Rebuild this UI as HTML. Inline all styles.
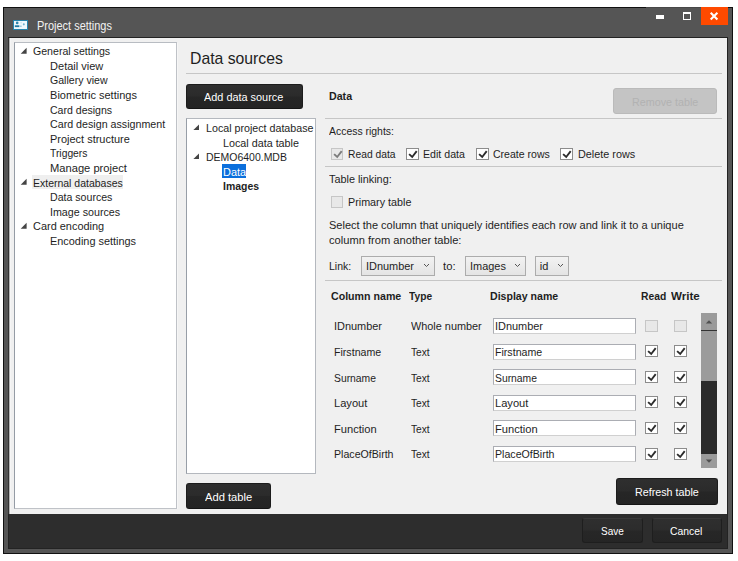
<!DOCTYPE html>
<html><head><meta charset="utf-8"><style>
html,body{margin:0;padding:0;}
body{width:738px;height:561px;background:#fff;position:relative;overflow:hidden;font-family:"Liberation Sans",sans-serif;}
.a{position:absolute;}
.t{position:absolute;white-space:nowrap;font-family:"Liberation Sans",sans-serif;}
</style></head><body>
<div class="a" style="left:3px;top:7px;width:730px;height:547px;box-sizing:border-box;background:#555;border:1px solid #111;"></div>
<div class="a" style="left:8px;top:37px;width:720px;height:512px;box-sizing:border-box;background:#f0f0f0;border:1px solid #232323;"></div>
<div class="a" style="left:9px;top:514px;width:718px;height:34px;background:#2d2d2d;"></div>
<div class="a" style="left:8px;top:38px;width:1px;height:476px;background:#333;"></div>
<div class="a" style="left:9px;top:38px;width:1px;height:476px;background:#b4b4b4;"></div>
<div class="a" style="left:10px;top:38px;width:1px;height:476px;background:#f5f5f5;"></div>
<svg class="a" style="left:13px;top:20px" width="15" height="10" viewBox="0 0 15 10">
<rect x="0.5" y="0.5" width="14" height="9" fill="#eef8fc" stroke="#2584ad" stroke-width="1"/>
<circle cx="4.2" cy="2.9" r="1.3" fill="#2a86ad"/>
<rect x="1.8" y="5.3" width="4.4" height="1.8" fill="#1f7aa3"/>
<rect x="6.2" y="5.6" width="2.5" height="1.2" fill="#8cc3da"/>
<ellipse cx="10.8" cy="4.3" rx="1" ry="1.1" fill="#6fb2cf"/>
<rect x="7.5" y="2" width="1.2" height="1.5" fill="#c5e2ee"/>
</svg>
<div class="t" style="left:36.70px;top:17.84px;font-size:12px;line-height:16px;color:#f2f2f2;transform:scaleX(0.9136);transform-origin:0 0;">Project settings</div>
<div class="a" style="left:646px;top:7px;width:55px;height:1px;background:#484848;"></div>
<div class="a" style="left:656px;top:15px;width:8px;height:4px;background:#fff;"></div>
<div class="a" style="left:683px;top:12px;width:8px;height:8px;box-sizing:border-box;border:1px solid #fff;border-top-width:2px;"></div>
<div class="a" style="left:701px;top:7px;width:27px;height:18px;background:#ff4a00;"></div>
<svg class="a" style="left:709px;top:11px" width="10" height="10" viewBox="0 0 10 10"><path d="M1.7 1.7 L8.4 8.4 M8.4 1.7 L1.7 8.4" stroke="#fff" stroke-width="2.1"/></svg>
<div class="a" style="left:14px;top:42px;width:163px;height:467px;box-sizing:border-box;background:#fff;border:1px solid #bfc2c7;border-top-color:#b8bcc2;border-left-color:#959ca5;"></div>
<div class="a" style="left:177px;top:43px;width:1px;height:466px;background:#f6f6f6;"></div>
<svg class="a" style="left:20px;top:47px" width="8" height="8" viewBox="0 0 8 8"><path d="M6.6 0.8 L6.6 6.8 L0.7 6.8 Z" fill="#444"/></svg>
<div class="t" style="left:32.90px;top:44.19px;font-size:11px;line-height:14px;color:#1e1e1e;transform:scaleX(0.9625);transform-origin:0 0;">General settings</div>
<div class="t" style="left:50.10px;top:58.79px;font-size:11px;line-height:14px;color:#1e1e1e;transform:scaleX(1.0000);transform-origin:0 0;">Detail view</div>
<div class="t" style="left:50.10px;top:73.39px;font-size:11px;line-height:14px;color:#1e1e1e;transform:scaleX(0.9600);transform-origin:0 0;">Gallery view</div>
<div class="t" style="left:50.10px;top:87.99px;font-size:11px;line-height:14px;color:#1e1e1e;transform:scaleX(1.0000);transform-origin:0 0;">Biometric settings</div>
<div class="t" style="left:50.10px;top:102.59px;font-size:11px;line-height:14px;color:#1e1e1e;transform:scaleX(0.9585);transform-origin:0 0;">Card designs</div>
<div class="t" style="left:50.10px;top:117.19px;font-size:11px;line-height:14px;color:#1e1e1e;transform:scaleX(0.9706);transform-origin:0 0;">Card design assignment</div>
<div class="t" style="left:50.10px;top:131.79px;font-size:11px;line-height:14px;color:#1e1e1e;transform:scaleX(0.9962);transform-origin:0 0;">Project structure</div>
<div class="t" style="left:50.10px;top:146.39px;font-size:11px;line-height:14px;color:#1e1e1e;transform:scaleX(0.9375);transform-origin:0 0;">Triggers</div>
<div class="t" style="left:50.10px;top:160.99px;font-size:11px;line-height:14px;color:#1e1e1e;transform:scaleX(1.0133);transform-origin:0 0;">Manage project</div>
<div class="a" style="left:32px;top:175px;width:91px;height:14px;background:#efefef;"></div>
<svg class="a" style="left:20px;top:178px" width="8" height="8" viewBox="0 0 8 8"><path d="M6.6 0.8 L6.6 6.8 L0.7 6.8 Z" fill="#444"/></svg>
<div class="t" style="left:32.90px;top:175.59px;font-size:11px;line-height:14px;color:#1e1e1e;transform:scaleX(0.9527);transform-origin:0 0;">External databases</div>
<div class="t" style="left:50.10px;top:190.19px;font-size:11px;line-height:14px;color:#1e1e1e;transform:scaleX(0.9625);transform-origin:0 0;">Data sources</div>
<div class="t" style="left:50.10px;top:204.79px;font-size:11px;line-height:14px;color:#1e1e1e;transform:scaleX(0.9718);transform-origin:0 0;">Image sources</div>
<svg class="a" style="left:20px;top:222px" width="8" height="8" viewBox="0 0 8 8"><path d="M6.6 0.8 L6.6 6.8 L0.7 6.8 Z" fill="#444"/></svg>
<div class="t" style="left:32.90px;top:219.39px;font-size:11px;line-height:14px;color:#1e1e1e;transform:scaleX(0.9944);transform-origin:0 0;">Card encoding</div>
<div class="t" style="left:50.10px;top:233.99px;font-size:11px;line-height:14px;color:#1e1e1e;transform:scaleX(0.9907);transform-origin:0 0;">Encoding settings</div>
<div class="t" style="left:190.40px;top:47.81px;font-size:17px;line-height:22px;color:#1e1e1e;transform:scaleX(0.9273);transform-origin:0 0;">Data sources</div>
<div class="a" style="left:186px;top:73px;width:536px;height:1px;background:#c6c6c6;"></div>
<div class="a" style="left:186px;top:84px;width:117px;height:25px;box-sizing:border-box;background:linear-gradient(#2f2f2f 0%,#2b2b2b 48%,#262626 52%,#242424 100%);border:1px solid #1c1c1c;border-bottom-color:#151515;border-radius:3px;"></div>
<div class="t" style="left:204.20px;top:90.19px;font-size:11px;line-height:14px;color:#fff;transform:scaleX(0.9900);transform-origin:0 0;">Add data source</div>
<div class="a" style="left:186px;top:118px;width:130px;height:356px;box-sizing:border-box;background:#fff;border:1px solid #b4b8be;border-left-color:#979ea7;"></div>
<svg class="a" style="left:193px;top:124px" width="8" height="8" viewBox="0 0 8 8"><path d="M6 0.6 L6 6 L0.4 6 Z" fill="#444"/></svg>
<div class="t" style="left:205.60px;top:121.39px;font-size:11px;line-height:14px;color:#1e1e1e;transform:scaleX(0.9709);transform-origin:0 0;">Local project database</div>
<div class="t" style="left:223.00px;top:135.79px;font-size:11px;line-height:14px;color:#1e1e1e;transform:scaleX(0.9779);transform-origin:0 0;">Local data table</div>
<svg class="a" style="left:193px;top:153px" width="8" height="8" viewBox="0 0 8 8"><path d="M6 0.6 L6 6 L0.4 6 Z" fill="#444"/></svg>
<div class="t" style="left:205.60px;top:150.19px;font-size:11px;line-height:14px;color:#1e1e1e;transform:scaleX(0.9524);transform-origin:0 0;">DEMO6400.MDB</div>
<div class="a" style="left:222px;top:164px;width:24px;height:14px;background:#0b6fdc;"></div>
<div class="t" style="left:223.00px;top:164.69px;font-size:11px;line-height:14px;color:#fff;transform:scaleX(0.9955);transform-origin:0 0;">Data</div>
<div class="t" style="left:223.00px;top:178.99px;font-size:11px;line-height:14px;color:#1e1e1e;font-weight:bold;transform:scaleX(0.9526);transform-origin:0 0;">Images</div>
<div class="t" style="left:329.40px;top:89.19px;font-size:11px;line-height:14px;color:#1e1e1e;font-weight:bold;transform:scaleX(0.9667);transform-origin:0 0;">Data</div>
<div class="a" style="left:613px;top:88px;width:104px;height:26px;box-sizing:border-box;background:#c4c4c4;border:1px solid #bababa;border-radius:3px;"></div>
<div class="t" style="left:631.80px;top:94.79px;font-size:11px;line-height:14px;color:#b2b2b2;transform:scaleX(0.9776);transform-origin:0 0;">Remove table</div>
<div class="a" style="left:325px;top:118px;width:397px;height:1px;background:#c6c6c6;"></div>
<div class="t" style="left:329.40px;top:124.39px;font-size:11px;line-height:14px;color:#1e1e1e;transform:scaleX(0.9485);transform-origin:0 0;">Access rights:</div>
<div class="a" style="left:331px;top:148px;width:12px;height:12px;box-sizing:border-box;background:#e8e8e8;border:1px solid #c6c6c6;"><svg width="12" height="12" viewBox="0 0 12 12" style="position:absolute;left:-1px;top:-1px"><path d="M3.1 6.1 L6.2 9.0 L10.7 3.1" fill="none" stroke="#7c7c7c" stroke-width="1.85"/></svg></div>
<div class="t" style="left:348.10px;top:147.39px;font-size:11px;line-height:14px;color:#1e1e1e;transform:scaleX(0.9360);transform-origin:0 0;">Read data</div>
<div class="a" style="left:406px;top:148px;width:13px;height:12px;box-sizing:border-box;background:#fff;border:1px solid #8c8c8c;"><svg width="13" height="12" viewBox="0 0 13 12" style="position:absolute;left:-1px;top:-1px"><path d="M3.1 6.1 L6.2 9.0 L10.7 3.1" fill="none" stroke="#2c2c2c" stroke-width="1.85"/></svg></div>
<div class="t" style="left:423.40px;top:147.39px;font-size:11px;line-height:14px;color:#1e1e1e;transform:scaleX(0.9651);transform-origin:0 0;">Edit data</div>
<div class="a" style="left:476px;top:148px;width:13px;height:12px;box-sizing:border-box;background:#fff;border:1px solid #8c8c8c;"><svg width="13" height="12" viewBox="0 0 13 12" style="position:absolute;left:-1px;top:-1px"><path d="M3.1 6.1 L6.2 9.0 L10.7 3.1" fill="none" stroke="#2c2c2c" stroke-width="1.85"/></svg></div>
<div class="t" style="left:493.10px;top:147.39px;font-size:11px;line-height:14px;color:#1e1e1e;transform:scaleX(0.9576);transform-origin:0 0;">Create rows</div>
<div class="a" style="left:560px;top:148px;width:13px;height:12px;box-sizing:border-box;background:#fff;border:1px solid #8c8c8c;"><svg width="13" height="12" viewBox="0 0 13 12" style="position:absolute;left:-1px;top:-1px"><path d="M3.1 6.1 L6.2 9.0 L10.7 3.1" fill="none" stroke="#2c2c2c" stroke-width="1.85"/></svg></div>
<div class="t" style="left:577.90px;top:147.39px;font-size:11px;line-height:14px;color:#1e1e1e;transform:scaleX(0.9842);transform-origin:0 0;">Delete rows</div>
<div class="a" style="left:325px;top:166px;width:397px;height:1px;background:#c6c6c6;"></div>
<div class="t" style="left:329.30px;top:171.79px;font-size:11px;line-height:14px;color:#1e1e1e;transform:scaleX(0.9857);transform-origin:0 0;">Table linking:</div>
<div class="a" style="left:331px;top:196px;width:12px;height:12px;box-sizing:border-box;background:#e8e8e8;border:1px solid #c6c6c6;"></div>
<div class="t" style="left:347.70px;top:194.79px;font-size:11px;line-height:14px;color:#1e1e1e;transform:scaleX(0.9781);transform-origin:0 0;">Primary table</div>
<div class="t" style="left:329.40px;top:218.39px;font-size:11px;line-height:14px;color:#1e1e1e;transform:scaleX(1.0020);transform-origin:0 0;">Select the column that uniquely identifies each row and link it to a unique</div>
<div class="t" style="left:329.20px;top:232.59px;font-size:11px;line-height:14px;color:#1e1e1e;transform:scaleX(1.0123);transform-origin:0 0;">column from another table:</div>
<div class="t" style="left:329.30px;top:259.49px;font-size:11px;line-height:14px;color:#1e1e1e;transform:scaleX(0.9545);transform-origin:0 0;">Link:</div>
<div class="a" style="left:361px;top:256px;width:74px;height:20px;box-sizing:border-box;border:1px solid #acacac;background:linear-gradient(#f2f2f2,#e4e4e4);"></div>
<div class="t" style="left:365.70px;top:259.49px;font-size:11px;line-height:14px;color:#1e1e1e;transform:scaleX(0.9938);transform-origin:0 0;">IDnumber</div>
<svg class="a" style="left:423px;top:263px" width="7" height="5" viewBox="0 0 7 5"><path d="M1 1 L3.5 3.5 L6 1" fill="none" stroke="#555" stroke-width="1"/></svg>
<div class="t" style="left:443.20px;top:259.49px;font-size:11px;line-height:14px;color:#1e1e1e;transform:scaleX(1.0250);transform-origin:0 0;">to:</div>
<div class="a" style="left:465px;top:256px;width:61px;height:20px;box-sizing:border-box;border:1px solid #acacac;background:linear-gradient(#f2f2f2,#e4e4e4);"></div>
<div class="t" style="left:469.70px;top:259.49px;font-size:11px;line-height:14px;color:#1e1e1e;transform:scaleX(0.9943);transform-origin:0 0;">Images</div>
<svg class="a" style="left:514px;top:263px" width="7" height="5" viewBox="0 0 7 5"><path d="M1 1 L3.5 3.5 L6 1" fill="none" stroke="#555" stroke-width="1"/></svg>
<div class="a" style="left:535px;top:256px;width:34px;height:20px;box-sizing:border-box;border:1px solid #acacac;background:linear-gradient(#f2f2f2,#e4e4e4);"></div>
<div class="t" style="left:539.70px;top:259.49px;font-size:11px;line-height:14px;color:#1e1e1e;transform:scaleX(1.0000);transform-origin:0 0;">id</div>
<svg class="a" style="left:557px;top:263px" width="7" height="5" viewBox="0 0 7 5"><path d="M1 1 L3.5 3.5 L6 1" fill="none" stroke="#555" stroke-width="1"/></svg>
<div class="a" style="left:325px;top:280px;width:397px;height:1px;background:#c6c6c6;"></div>
<div class="t" style="left:330.90px;top:288.79px;font-size:11px;line-height:14px;color:#1e1e1e;font-weight:bold;transform:scaleX(0.9658);transform-origin:0 0;">Column name</div>
<div class="t" style="left:409.00px;top:288.79px;font-size:11px;line-height:14px;color:#1e1e1e;font-weight:bold;transform:scaleX(0.9280);transform-origin:0 0;">Type</div>
<div class="t" style="left:490.10px;top:288.79px;font-size:11px;line-height:14px;color:#1e1e1e;font-weight:bold;transform:scaleX(0.9620);transform-origin:0 0;">Display name</div>
<div class="t" style="left:641.00px;top:288.79px;font-size:11px;line-height:14px;color:#1e1e1e;font-weight:bold;transform:scaleX(0.9370);transform-origin:0 0;">Read</div>
<div class="t" style="left:670.60px;top:288.79px;font-size:11px;line-height:14px;color:#1e1e1e;font-weight:bold;transform:scaleX(1.0556);transform-origin:0 0;">Write</div>
<div class="t" style="left:334.00px;top:319.49px;font-size:11px;line-height:14px;color:#1e1e1e;transform:scaleX(0.9938);transform-origin:0 0;">IDnumber</div>
<div class="t" style="left:411.40px;top:319.49px;font-size:11px;line-height:14px;color:#1e1e1e;transform:scaleX(0.9889);transform-origin:0 0;">Whole number</div>
<div class="a" style="left:493px;top:318px;width:143px;height:16px;box-sizing:border-box;background:#fff;border:1px solid #abadb3;border-bottom-color:#d0d0d0;"></div>
<div class="t" style="left:495.20px;top:319.49px;font-size:11px;line-height:14px;color:#1e1e1e;transform:scaleX(0.9938);transform-origin:0 0;">IDnumber</div>
<div class="a" style="left:645px;top:320px;width:13px;height:12px;box-sizing:border-box;background:#e8e8e8;border:1px solid #c6c6c6;"></div>
<div class="a" style="left:674px;top:320px;width:13px;height:12px;box-sizing:border-box;background:#e8e8e8;border:1px solid #c6c6c6;"></div>
<div class="t" style="left:334.00px;top:345.09px;font-size:11px;line-height:14px;color:#1e1e1e;transform:scaleX(0.9646);transform-origin:0 0;">Firstname</div>
<div class="t" style="left:411.40px;top:345.09px;font-size:11px;line-height:14px;color:#1e1e1e;transform:scaleX(0.9250);transform-origin:0 0;">Text</div>
<div class="a" style="left:493px;top:344px;width:143px;height:16px;box-sizing:border-box;background:#fff;border:1px solid #abadb3;border-bottom-color:#d0d0d0;"></div>
<div class="t" style="left:495.20px;top:345.09px;font-size:11px;line-height:14px;color:#1e1e1e;transform:scaleX(0.9646);transform-origin:0 0;">Firstname</div>
<div class="a" style="left:645px;top:345px;width:13px;height:12px;box-sizing:border-box;background:#fff;border:1px solid #8c8c8c;"><svg width="13" height="12" viewBox="0 0 13 12" style="position:absolute;left:-1px;top:-1px"><path d="M3.1 6.1 L6.2 9.0 L10.7 3.1" fill="none" stroke="#2c2c2c" stroke-width="1.85"/></svg></div>
<div class="a" style="left:674px;top:345px;width:13px;height:12px;box-sizing:border-box;background:#fff;border:1px solid #8c8c8c;"><svg width="13" height="12" viewBox="0 0 13 12" style="position:absolute;left:-1px;top:-1px"><path d="M3.1 6.1 L6.2 9.0 L10.7 3.1" fill="none" stroke="#2c2c2c" stroke-width="1.85"/></svg></div>
<div class="t" style="left:334.00px;top:370.69px;font-size:11px;line-height:14px;color:#1e1e1e;transform:scaleX(0.9400);transform-origin:0 0;">Surname</div>
<div class="t" style="left:411.40px;top:370.69px;font-size:11px;line-height:14px;color:#1e1e1e;transform:scaleX(0.9250);transform-origin:0 0;">Text</div>
<div class="a" style="left:493px;top:369px;width:143px;height:16px;box-sizing:border-box;background:#fff;border:1px solid #abadb3;border-bottom-color:#d0d0d0;"></div>
<div class="t" style="left:495.20px;top:370.69px;font-size:11px;line-height:14px;color:#1e1e1e;transform:scaleX(0.9400);transform-origin:0 0;">Surname</div>
<div class="a" style="left:645px;top:371px;width:13px;height:12px;box-sizing:border-box;background:#fff;border:1px solid #8c8c8c;"><svg width="13" height="12" viewBox="0 0 13 12" style="position:absolute;left:-1px;top:-1px"><path d="M3.1 6.1 L6.2 9.0 L10.7 3.1" fill="none" stroke="#2c2c2c" stroke-width="1.85"/></svg></div>
<div class="a" style="left:674px;top:371px;width:13px;height:12px;box-sizing:border-box;background:#fff;border:1px solid #8c8c8c;"><svg width="13" height="12" viewBox="0 0 13 12" style="position:absolute;left:-1px;top:-1px"><path d="M3.1 6.1 L6.2 9.0 L10.7 3.1" fill="none" stroke="#2c2c2c" stroke-width="1.85"/></svg></div>
<div class="t" style="left:334.00px;top:396.29px;font-size:11px;line-height:14px;color:#1e1e1e;transform:scaleX(1.0094);transform-origin:0 0;">Layout</div>
<div class="t" style="left:411.40px;top:396.29px;font-size:11px;line-height:14px;color:#1e1e1e;transform:scaleX(0.9250);transform-origin:0 0;">Text</div>
<div class="a" style="left:493px;top:395px;width:143px;height:16px;box-sizing:border-box;background:#fff;border:1px solid #abadb3;border-bottom-color:#d0d0d0;"></div>
<div class="t" style="left:495.20px;top:396.29px;font-size:11px;line-height:14px;color:#1e1e1e;transform:scaleX(1.0094);transform-origin:0 0;">Layout</div>
<div class="a" style="left:645px;top:396px;width:13px;height:12px;box-sizing:border-box;background:#fff;border:1px solid #8c8c8c;"><svg width="13" height="12" viewBox="0 0 13 12" style="position:absolute;left:-1px;top:-1px"><path d="M3.1 6.1 L6.2 9.0 L10.7 3.1" fill="none" stroke="#2c2c2c" stroke-width="1.85"/></svg></div>
<div class="a" style="left:674px;top:396px;width:13px;height:12px;box-sizing:border-box;background:#fff;border:1px solid #8c8c8c;"><svg width="13" height="12" viewBox="0 0 13 12" style="position:absolute;left:-1px;top:-1px"><path d="M3.1 6.1 L6.2 9.0 L10.7 3.1" fill="none" stroke="#2c2c2c" stroke-width="1.85"/></svg></div>
<div class="t" style="left:334.00px;top:421.89px;font-size:11px;line-height:14px;color:#1e1e1e;transform:scaleX(1.0098);transform-origin:0 0;">Function</div>
<div class="t" style="left:411.40px;top:421.89px;font-size:11px;line-height:14px;color:#1e1e1e;transform:scaleX(0.9250);transform-origin:0 0;">Text</div>
<div class="a" style="left:493px;top:420px;width:143px;height:16px;box-sizing:border-box;background:#fff;border:1px solid #abadb3;border-bottom-color:#d0d0d0;"></div>
<div class="t" style="left:495.20px;top:421.89px;font-size:11px;line-height:14px;color:#1e1e1e;transform:scaleX(1.0098);transform-origin:0 0;">Function</div>
<div class="a" style="left:645px;top:422px;width:13px;height:12px;box-sizing:border-box;background:#fff;border:1px solid #8c8c8c;"><svg width="13" height="12" viewBox="0 0 13 12" style="position:absolute;left:-1px;top:-1px"><path d="M3.1 6.1 L6.2 9.0 L10.7 3.1" fill="none" stroke="#2c2c2c" stroke-width="1.85"/></svg></div>
<div class="a" style="left:674px;top:422px;width:13px;height:12px;box-sizing:border-box;background:#fff;border:1px solid #8c8c8c;"><svg width="13" height="12" viewBox="0 0 13 12" style="position:absolute;left:-1px;top:-1px"><path d="M3.1 6.1 L6.2 9.0 L10.7 3.1" fill="none" stroke="#2c2c2c" stroke-width="1.85"/></svg></div>
<div class="t" style="left:334.00px;top:447.49px;font-size:11px;line-height:14px;color:#1e1e1e;transform:scaleX(0.9639);transform-origin:0 0;">PlaceOfBirth</div>
<div class="t" style="left:411.40px;top:447.49px;font-size:11px;line-height:14px;color:#1e1e1e;transform:scaleX(0.9250);transform-origin:0 0;">Text</div>
<div class="a" style="left:493px;top:446px;width:143px;height:16px;box-sizing:border-box;background:#fff;border:1px solid #abadb3;border-bottom-color:#d0d0d0;"></div>
<div class="t" style="left:495.20px;top:447.49px;font-size:11px;line-height:14px;color:#1e1e1e;transform:scaleX(0.9639);transform-origin:0 0;">PlaceOfBirth</div>
<div class="a" style="left:645px;top:448px;width:13px;height:12px;box-sizing:border-box;background:#fff;border:1px solid #8c8c8c;"><svg width="13" height="12" viewBox="0 0 13 12" style="position:absolute;left:-1px;top:-1px"><path d="M3.1 6.1 L6.2 9.0 L10.7 3.1" fill="none" stroke="#2c2c2c" stroke-width="1.85"/></svg></div>
<div class="a" style="left:674px;top:448px;width:13px;height:12px;box-sizing:border-box;background:#fff;border:1px solid #8c8c8c;"><svg width="13" height="12" viewBox="0 0 13 12" style="position:absolute;left:-1px;top:-1px"><path d="M3.1 6.1 L6.2 9.0 L10.7 3.1" fill="none" stroke="#2c2c2c" stroke-width="1.85"/></svg></div>
<div class="a" style="left:701px;top:313px;width:16px;height:155px;background:#9b9b9b;"></div>
<div class="a" style="left:701px;top:330px;width:16px;height:1px;background:#333;"></div>
<div class="a" style="left:701px;top:381px;width:16px;height:73px;background:#2b2b2b;"></div>
<svg class="a" style="left:705px;top:319px" width="8" height="5" viewBox="0 0 8 5"><path d="M0.8 4.5 L4 1.2 L7.2 4.5 Z" fill="#505050"/></svg>
<svg class="a" style="left:705px;top:459px" width="8" height="5" viewBox="0 0 8 5"><path d="M0.8 0.5 L4 3.8 L7.2 0.5 Z" fill="#505050"/></svg>
<div class="a" style="left:186px;top:483px;width:85px;height:26px;box-sizing:border-box;background:linear-gradient(#2f2f2f 0%,#2b2b2b 48%,#262626 52%,#242424 100%);border:1px solid #1c1c1c;border-bottom-color:#151515;border-radius:3px;"></div>
<div class="t" style="left:204.50px;top:490.19px;font-size:11px;line-height:14px;color:#fff;transform:scaleX(1.0152);transform-origin:0 0;">Add table</div>
<div class="a" style="left:616px;top:478px;width:102px;height:27px;box-sizing:border-box;background:linear-gradient(#2f2f2f 0%,#2b2b2b 48%,#262626 52%,#242424 100%);border:1px solid #1c1c1c;border-bottom-color:#151515;border-radius:3px;"></div>
<div class="t" style="left:635.30px;top:484.99px;font-size:11px;line-height:14px;color:#fff;transform:scaleX(0.9750);transform-origin:0 0;">Refresh table</div>
<div class="a" style="left:582px;top:518px;width:61px;height:25px;box-sizing:border-box;background:linear-gradient(#2f2f2f 0%,#2c2c2c 48%,#272727 52%,#252525 100%);border:1px solid #1e1e1e;border-top-color:#3a3a3a;border-radius:3px;"></div>
<div class="t" style="left:600.50px;top:524.19px;font-size:11px;line-height:14px;color:#fff;transform:scaleX(0.9080);transform-origin:0 0;">Save</div>
<div class="a" style="left:652px;top:518px;width:70px;height:25px;box-sizing:border-box;background:linear-gradient(#2f2f2f 0%,#2c2c2c 48%,#272727 52%,#252525 100%);border:1px solid #1e1e1e;border-top-color:#3a3a3a;border-radius:3px;"></div>
<div class="t" style="left:670.40px;top:524.19px;font-size:11px;line-height:14px;color:#fff;transform:scaleX(0.9412);transform-origin:0 0;">Cancel</div>
</body></html>
